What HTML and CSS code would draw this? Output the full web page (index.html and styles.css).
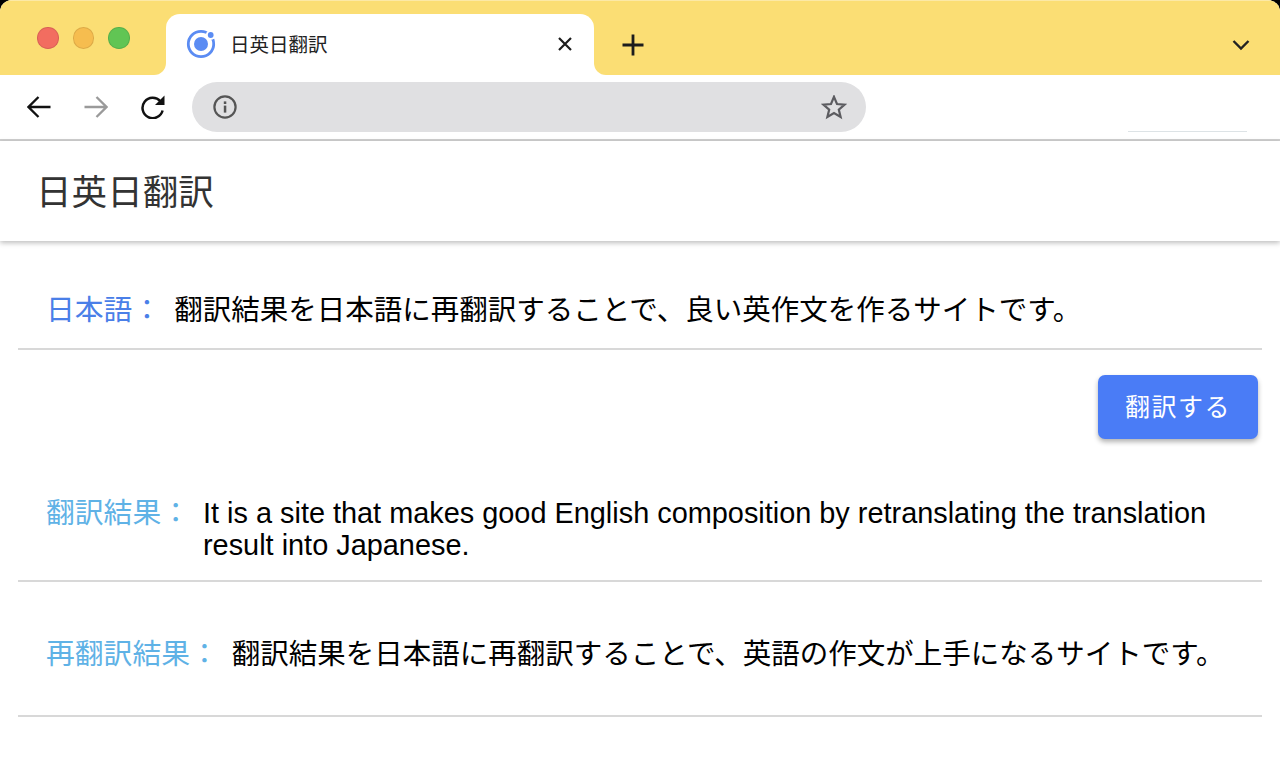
FILE: index.html
```html
<!DOCTYPE html>
<html lang="ja">
<head>
<meta charset="UTF-8">
<meta name="viewport" content="width=device-width, initial-scale=1.0">
<title>日英日翻訳</title>
<link rel="stylesheet" href="styles.css">
</head>
<body>
    <div class="corners">
        <div class="strip">
            <div class="lights">
                <span class="light red"></span>
                <span class="light amber"></span>
                <span class="light green"></span>
            </div>
            <div class="tab-wrap">
                <div class="tab">
                    <svg class="favicon" width="32" height="32" viewBox="0 0 32 32">
                        <circle cx="15" cy="16" r="12.7" fill="none" stroke="#5b8cf3" stroke-width="2.8"/>
                        <circle cx="15" cy="16" r="7" fill="#5b8cf3"/>
                        <circle cx="24.7" cy="7" r="4.8" fill="#fff"/>
                        <circle cx="24.7" cy="7" r="2.9" fill="#5b8cf3"/>
                    </svg>
                    <span class="tab-title">日英日翻訳</span>
                    <svg class="tab-close" width="16" height="16" viewBox="0 0 16 16">
                        <path d="M2 2 L14 14 M14 2 L2 14" stroke="#1c1c1c" stroke-width="2.2" fill="none"/>
                    </svg>
                </div>
            </div>
            <div class="strip-right">
                <svg class="plus" width="22" height="22" viewBox="0 0 22 22">
                    <path d="M0.5 11 H21.5 M11 0.5 V21.5" stroke="#1c1c1c" stroke-width="2.8" fill="none"/>
                </svg>
                <svg class="chevron" width="18" height="12" viewBox="0 0 18 12">
                    <path d="M1.5 2 L9 9.5 L16.5 2" stroke="#222" stroke-width="2.4" fill="none"/>
                </svg>
            </div>
        </div>
    </div>

    <div class="toolbar">
        <svg class="nav-icon" width="24" height="22" viewBox="0 0 24 22">
            <path d="M23.5 11 H2 M11.5 1 L1.5 11 L11.5 21" stroke="#111" stroke-width="2.3" fill="none"/>
        </svg>
        <svg class="nav-icon" width="24" height="22" viewBox="0 0 24 22">
            <path d="M0.5 11 H22 M12.5 1 L22.5 11 L12.5 21" stroke="#9a9a9a" stroke-width="2.3" fill="none"/>
        </svg>
        <svg class="nav-icon" width="24" height="24" viewBox="0 0 24 24">
            <path d="M19.4 6.2 A10.2 10.2 0 1 0 21.6 15.5" stroke="#111" stroke-width="2.5" fill="none"/>
            <path d="M14 10 H23.5 V0.5 Z" fill="#111"/>
        </svg>
        <div class="omnibox">
            <svg width="24" height="24" viewBox="0 0 24 24">
                <circle cx="12" cy="12" r="10.6" fill="none" stroke="#555" stroke-width="2.2"/>
                <rect x="10.8" y="10.6" width="2.5" height="7" fill="#555"/>
                <rect x="10.8" y="6.4" width="2.5" height="2.6" fill="#555"/>
            </svg>
            <svg width="26" height="25" viewBox="0 1 26 25">
                <path d="M13 2.8 L16 10 L23.6 10.6 L17.8 15.6 L19.6 23 L13 19 L6.4 23 L8.2 15.6 L2.4 10.6 L10 10 Z" fill="none" stroke="#5c5c60" stroke-width="2.2"/>
            </svg>
        </div>
        <div class="ext-line"></div>
    </div>

    <div class="header">
        <h1 class="page-title">日英日翻訳</h1>
    </div>

    <div class="content">
        <div class="row row-source">
            <span class="label label-primary">日本語：</span>
            <span class="value">翻訳結果を日本語に再翻訳することで、良い英作文を作るサイトです。</span>
        </div>
        <div class="actions">
            <button class="translate">翻訳する</button>
        </div>
        <div class="row row-result">
            <span class="label label-secondary">翻訳結果：</span>
            <span class="value value-en">It is a site that makes good English composition by retranslating the translation result into Japanese.</span>
        </div>
        <div class="row row-back">
            <span class="label label-secondary">再翻訳結果：</span>
            <span class="value">翻訳結果を日本語に再翻訳することで、英語の作文が上手になるサイトです。</span>
        </div>
    </div>
</body>
</html>
```

FILE: styles.css
```css
html, body {
  margin: 0;
  padding: 0;
  height: 782px;
  overflow: hidden;
}

body {
  background-color: white;
  font-family: "Liberation Sans", "Noto Sans CJK JP", sans-serif;
}

.corners {
  background-color: black;
}

.strip {
  display: flex;
  height: 75px;
  background-color: white;
  border-radius: 12px 12px 0 0;
  overflow: hidden;
}

.lights {
  width: 166px;
  box-sizing: border-box;
  padding: 26px 0 0 37px;
  display: flex;
  gap: 14px;
  background-color: #fbde74;
  border-top: 1px solid #fce9a6;
  border-bottom-right-radius: 12px;
}

.light {
  width: 21.5px;
  height: 21.5px;
  border-radius: 50%;
  box-sizing: border-box;
  border: 1px solid rgba(0, 0, 0, 0.1);
}

.red { background-color: #f26d60; }
.amber { background-color: #f6bd4f; }
.green { background-color: #61c554; }

.tab-wrap {
  width: 428px;
  padding-top: 13px;
  box-sizing: border-box;
  background-color: #fbde74;
  border-top: 1px solid #fce9a6;
}

.tab {
  height: 61px;
  background-color: white;
  border-radius: 14px 14px 0 0;
  display: flex;
  align-items: center;
  padding: 0 21px 2px 20px;
  box-sizing: border-box;
}

.favicon {
  margin-right: 12px;
}

.tab-title {
  font-size: 19.5px;
  color: #222;
  flex: 1;
}

.strip-right {
  flex: 1;
  display: flex;
  align-items: center;
  justify-content: space-between;
  padding: 13px 30px 0 28px;
  background-color: #fbde74;
  border-top: 1px solid #fce9a6;
  border-bottom-left-radius: 12px;
}

.toolbar {
  height: 64px;
  display: flex;
  align-items: center;
  padding-left: 27px;
  border-bottom: 2px solid #cfcfcf;
  position: relative;
}

.nav-icon {
  margin-right: 33px;
}

.nav-icon:nth-child(3) {
  margin-right: 27px;
}

.omnibox {
  width: 674px;
  height: 50px;
  background-color: #e0e0e2;
  border-radius: 25px;
  display: flex;
  align-items: center;
  justify-content: space-between;
  padding: 0 19px 0 21px;
  box-sizing: border-box;
}

.ext-line {
  position: absolute;
  left: 1128px;
  bottom: 7px;
  width: 119px;
  height: 1px;
  background-color: #dde3e6;
}

.header {
  height: 100px;
  box-sizing: border-box;
  display: flex;
  align-items: center;
  padding: 0 0 3px 36px;
  box-shadow: 0 2px 5px rgba(0, 0, 0, 0.26);
  position: relative;
}

.page-title {
  margin: 0;
  font-size: 35.6px;
  font-weight: normal;
  color: #333;
}

.content {
  padding: 0 18px;
}

.row {
  display: flex;
  padding-left: 28px;
  border-bottom: 2px solid #d8d8d8;
  box-sizing: border-box;
  font-size: 28.8px;
  line-height: 32px;
}

.row-source {
  height: 109px;
  align-items: center;
  padding-top: 30px;
}

.row-result {
  height: 117px;
  padding-top: 32px;
  padding-right: 30px;
}

.row-back {
  height: 135px;
  align-items: center;
  padding-top: 11px;
}

.label {
  margin-right: 13px;
  white-space: nowrap;
}

.label-primary {
  color: #4a7fe8;
}

.label-secondary {
  color: #5fb2e6;
}

.value {
  color: #000;
  font-size: 28.5px;
}

.value-en {
  font-size: 28.88px;
}

.actions {
  display: flex;
  justify-content: flex-end;
  height: 115px;
  padding: 25px 4px 0 0;
  box-sizing: border-box;
}

.translate {
  width: 160px;
  height: 64px;
  padding: 0 0 4px;
  border: none;
  border-radius: 7px;
  background-color: #4a7cf6;
  color: white;
  font-family: inherit;
  font-size: 25px;
  letter-spacing: 1.5px;
  box-shadow: 0 3px 5px rgba(0, 0, 0, 0.3);
}
```
